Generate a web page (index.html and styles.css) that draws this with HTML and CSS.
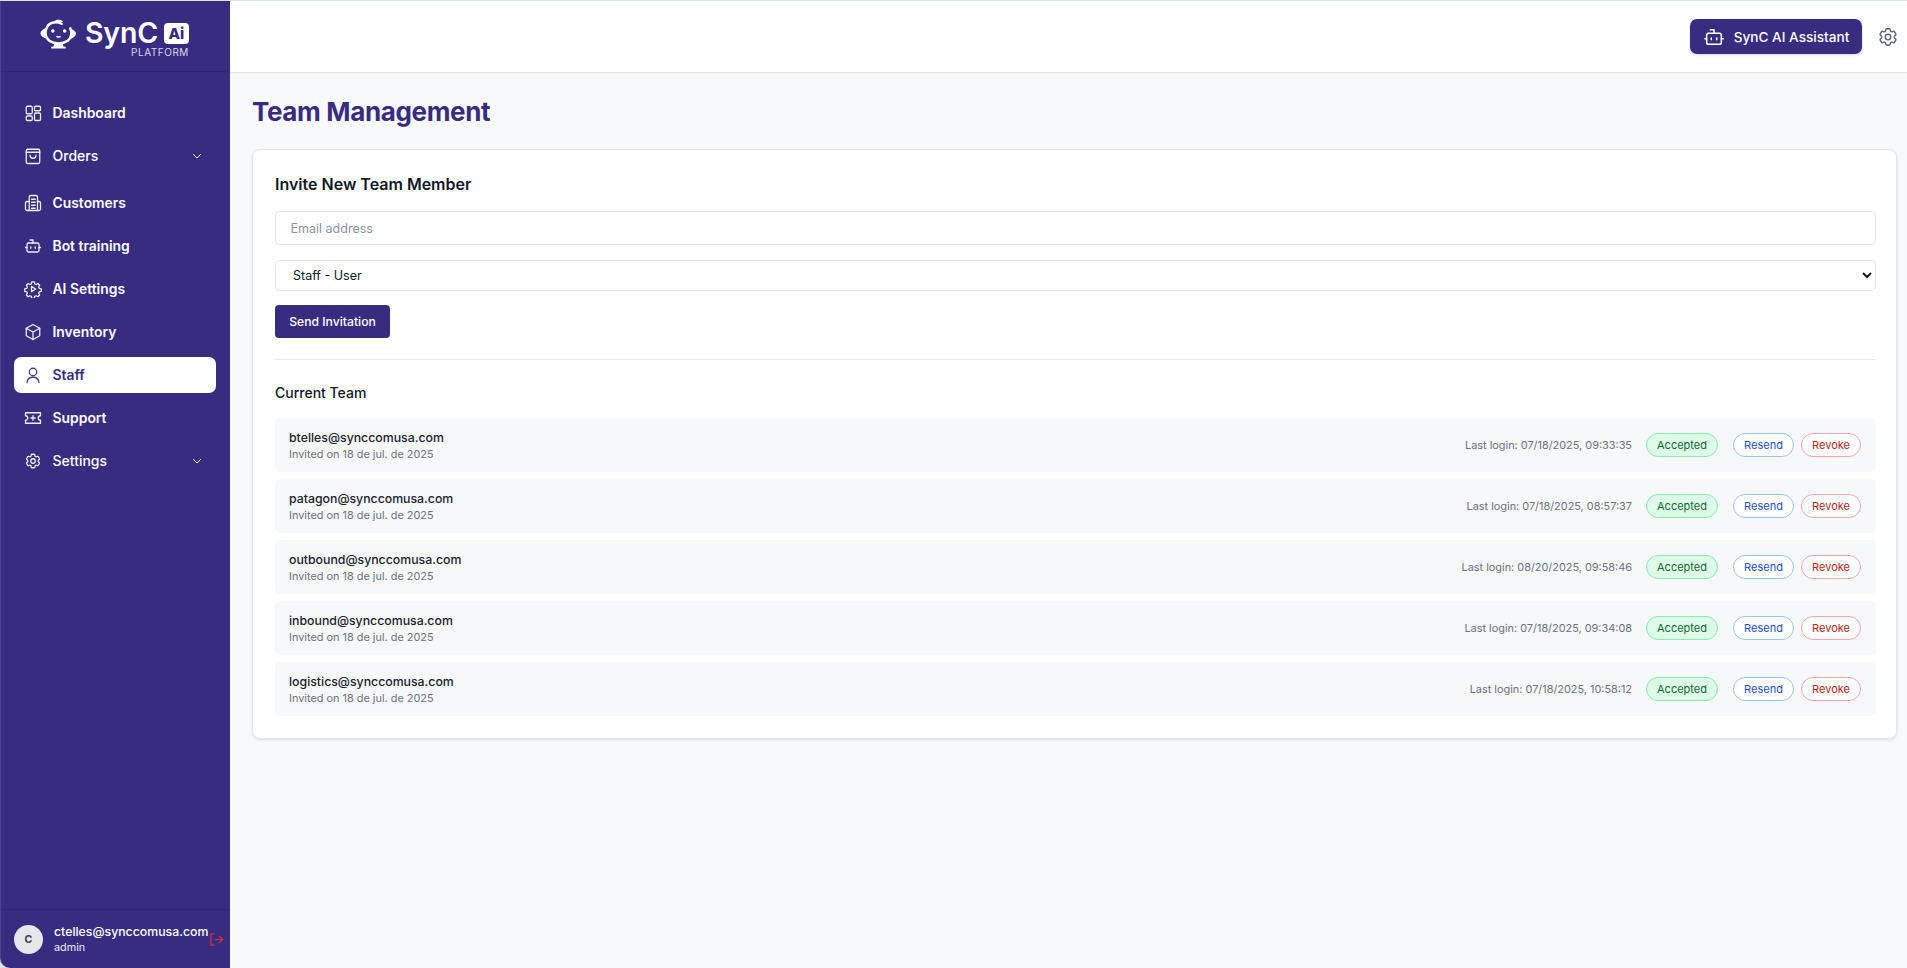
FILE: index.html
```html
<!DOCTYPE html>
<html lang="en">
<head>
<meta charset="utf-8">
<title>Team Management</title>
<link rel="stylesheet" href="styles.css">
</head>
<body>
<div class="app">
  <aside class="sidebar">
    <div class="brand">
      <svg class="brand-bot" viewBox="0 0 36 30" fill="none">
        <path d="M21 5.500C17 3 9 3.500 6.500 9.500 4.500 14 5.500 19 9 22 14 25.500 22 25.500 27 22 30.500 19 31.500 14 29.500 10" stroke="#fff" stroke-width="2.400" stroke-linecap="round"/>
        <path d="M6 9.500C2.500 11 .5 13 .5 15 .5 17 2.500 19 6.500 20Z" fill="#fff"/>
        <path d="M30 10.500C33 11.500 35 13 35 15 35 17 33 19 30 20Z" fill="#fff"/>
        <path d="M14 3.500C15 1 21 1 22.500 3.500 20 4 16 4 14 3.500Z" fill="#fff"/>
        <circle cx="12.500" cy="12.500" r="1.700" fill="#fff"/><circle cx="24" cy="12.500" r="1.700" fill="#fff"/>
        <path d="M16.500 18c1 .6 2.200.6 3 0" stroke="#fff" stroke-width="1.400" stroke-linecap="round"/>
        <path d="M14 25h8l1 3h2v1.500H11V28h2Z" fill="#fff"/>
      </svg>
      <div class="brand-text">
        <div class="brand-row"><span class="brand-name">SynC</span><span class="brand-badge">Ai</span></div>
        <div class="brand-sub">PLATFORM</div>
      </div>
    </div>
    <nav class="nav">
      <a class="nav-item"><svg class="ico" viewBox="0 0 24 24"><rect x="3" y="3" width="8" height="10" rx="1.500"/><rect x="14" y="3" width="8" height="6" rx="1.500"/><rect x="14" y="12" width="8" height="10" rx="1.500"/><rect x="3" y="16" width="8" height="6" rx="1.500"/></svg>Dashboard</a>
      <a class="nav-item nav-group"><svg class="ico" viewBox="0 0 24 24"><path d="M5 3h14a2 2 0 0 1 2 2v15a2 2 0 0 1-2 2H5a2 2 0 0 1-2-2V5a2 2 0 0 1 2-2Z"/><path d="M3 7h18"/><path d="M8 11a4 4 0 0 0 8 0"/></svg>Orders<svg class="chev" viewBox="0 0 24 24"><path d="m5 9 7 7 7-7"/></svg></a>
      <a class="nav-item nav-after-group"><svg class="ico" viewBox="0 0 24 24"><path d="M7 22V4a2 2 0 0 1 2-2h7a2 2 0 0 1 2 2v18"/><path d="M7 10H4a2 2 0 0 0-2 2v8a2 2 0 0 0 2 2h16a2 2 0 0 0 2-2v-8a2 2 0 0 0-2-2h-2"/><path d="M10 7h5M10 11h5M10 15h5M10 19h5"/></svg>Customers</a>
      <a class="nav-item"><svg class="ico" viewBox="0 0 24 24"><path d="M12 8V4H8"/><rect x="4" y="8" width="16" height="12" rx="2"/><path d="M2 14h2M20 14h2M15 13v2M9 13v2"/></svg>Bot training</a>
      <a class="nav-item"><svg class="ico" viewBox="0 0 24 24"><path d="M10.300 2.500h3.400l.5 2.600 2 .9 2.300-1.400 2.400 2.400-1.400 2.300.9 2 2.600.5v3.400l-2.600.5-.9 2 1.400 2.300-2.400 2.400-2.300-1.400-2 .9-.5 2.600h-3.400l-.5-2.600-2-.9-2.300 1.400-2.400-2.400 1.400-2.300-.9-2-2.600-.5v-3.400l2.600-.5.9-2-1.400-2.300 2.400-2.400 2.300 1.400 2-.9Z"/><path d="M10 8.500v7l5.500-3.500Z"/></svg>AI Settings</a>
      <a class="nav-item"><svg class="ico" viewBox="0 0 24 24"><path d="M12 2 21 7v10l-9 5-9-5V7Z"/><path d="m3 7 9 5 9-5M12 12v10"/></svg>Inventory</a>
      <a class="nav-item active"><svg class="ico" viewBox="0 0 24 24"><circle cx="12" cy="8" r="5"/><path d="M4 22c.5-5 3.500-7 8-7s7.500 2 8 7"/></svg>Staff</a>
      <a class="nav-item"><svg class="ico" viewBox="0 0 24 24"><path d="M2 5h20v4a3 3 0 0 0 0 6v4H2v-4a3 3 0 0 0 0-6Z"/><path d="M12 9v6M9 12h6"/></svg>Support</a>
      <a class="nav-item nav-group"><svg class="ico" viewBox="0 0 24 24"><path d="M9.594 3.940c.090-.542.560-.940 1.110-.940h2.593c.550 0 1.020.398 1.110.940l.213 1.281c.063.374.313.686.645.870.074.040.147.083.220.127.325.196.720.257 1.075.124l1.217-.456a1.125 1.125 0 0 1 1.370.490l1.296 2.247a1.125 1.125 0 0 1-.260 1.431l-1.003.827c-.293.241-.438.613-.430.992a7.723 7.723 0 0 1 0 .255c-.008.378.137.750.430.991l1.004.827c.424.350.534.955.260 1.430l-1.298 2.247a1.125 1.125 0 0 1-1.369.491l-1.217-.456c-.355-.133-.750-.072-1.076.124a6.470 6.470 0 0 1-.220.128c-.331.183-.581.495-.644.869l-.213 1.281c-.090.543-.560.940-1.110.940h-2.594c-.550 0-1.019-.398-1.110-.940l-.213-1.281c-.062-.374-.312-.686-.644-.870a6.520 6.520 0 0 1-.220-.127c-.325-.196-.720-.257-1.076-.124l-1.217.456a1.125 1.125 0 0 1-1.369-.490l-1.297-2.247a1.125 1.125 0 0 1 .260-1.431l1.004-.827c.292-.240.437-.613.430-.991a6.932 6.932 0 0 1 0-.255c.007-.380-.138-.751-.430-.992l-1.004-.827a1.125 1.125 0 0 1-.260-1.430l1.297-2.247a1.125 1.125 0 0 1 1.370-.491l1.216.456c.356.133.751.072 1.076-.124.072-.044.146-.086.220-.128.332-.183.582-.495.644-.869l.214-1.280Z"/><circle cx="12" cy="12" r="3"/></svg>Settings<svg class="chev" viewBox="0 0 24 24"><path d="m5 9 7 7 7-7"/></svg></a>
    </nav>
    <div class="user">
      <div class="avatar">C</div>
      <div class="user-text">
        <div class="user-mail">ctelles@synccomusa.com</div>
        <div class="user-role">admin</div>
      </div>
      <svg class="logout" viewBox="0 0 24 24"><path d="M8 3H3v18h5"/><path d="M10 12h12M17 7l5 5-5 5"/></svg>
    </div>
  </aside>
  <div class="content">
    <header class="topbar">
      <button class="assistant"><svg class="assistant-ico" viewBox="0 0 24 24"><path d="M12 8V4H8"/><rect x="4" y="8" width="16" height="12" rx="2"/><path d="M2 14h2M20 14h2M15 13v2M9 13v2"/></svg>SynC AI Assistant</button>
      <svg class="gear" viewBox="0 0 24 24"><path d="M9.594 3.940c.090-.542.560-.940 1.110-.940h2.593c.550 0 1.020.398 1.110.940l.213 1.281c.063.374.313.686.645.870.074.040.147.083.220.127.325.196.720.257 1.075.124l1.217-.456a1.125 1.125 0 0 1 1.370.490l1.296 2.247a1.125 1.125 0 0 1-.260 1.431l-1.003.827c-.293.241-.438.613-.430.992a7.723 7.723 0 0 1 0 .255c-.008.378.137.750.430.991l1.004.827c.424.350.534.955.260 1.430l-1.298 2.247a1.125 1.125 0 0 1-1.369.491l-1.217-.456c-.355-.133-.750-.072-1.076.124a6.470 6.470 0 0 1-.220.128c-.331.183-.581.495-.644.869l-.213 1.281c-.090.543-.560.940-1.110.940h-2.594c-.550 0-1.019-.398-1.110-.940l-.213-1.281c-.062-.374-.312-.686-.644-.870a6.520 6.520 0 0 1-.220-.127c-.325-.196-.720-.257-1.076-.124l-1.217.456a1.125 1.125 0 0 1-1.369-.490l-1.297-2.247a1.125 1.125 0 0 1 .260-1.431l1.004-.827c.292-.240.437-.613.430-.991a6.932 6.932 0 0 1 0-.255c.007-.380-.138-.751-.430-.992l-1.004-.827a1.125 1.125 0 0 1-.260-1.430l1.297-2.247a1.125 1.125 0 0 1 1.370-.491l1.216.456c.356.133.751.072 1.076-.124.072-.044.146-.086.220-.128.332-.183.582-.495.644-.869l.214-1.280Z"/><circle cx="12" cy="12" r="3"/></svg>
    </header>
    <main class="main">
      <h1 class="title">Team Management</h1>
      <section class="card">
        <h2 class="card-title">Invite New Team Member</h2>
        <input class="field" type="text" placeholder="Email address">
        <select class="select"><option>Staff - User</option></select>
        <button class="send">Send Invitation</button>
        <hr class="divider">
        <h3 class="team-title">Current Team</h3>
        <div class="team">
          <div class="row"><div class="who"><div class="mail">btelles@synccomusa.com</div><div class="invited">Invited on 18 de jul. de 2025</div></div><div class="login">Last login: 07/18/2025, 09:33:35</div><span class="status">Accepted</span><button class="act resend">Resend</button><button class="act revoke">Revoke</button></div>
          <div class="row"><div class="who"><div class="mail">patagon@synccomusa.com</div><div class="invited">Invited on 18 de jul. de 2025</div></div><div class="login">Last login: 07/18/2025, 08:57:37</div><span class="status">Accepted</span><button class="act resend">Resend</button><button class="act revoke">Revoke</button></div>
          <div class="row"><div class="who"><div class="mail">outbound@synccomusa.com</div><div class="invited">Invited on 18 de jul. de 2025</div></div><div class="login">Last login: 08/20/2025, 09:58:46</div><span class="status">Accepted</span><button class="act resend">Resend</button><button class="act revoke">Revoke</button></div>
          <div class="row"><div class="who"><div class="mail">inbound@synccomusa.com</div><div class="invited">Invited on 18 de jul. de 2025</div></div><div class="login">Last login: 07/18/2025, 09:34:08</div><span class="status">Accepted</span><button class="act resend">Resend</button><button class="act revoke">Revoke</button></div>
          <div class="row"><div class="who"><div class="mail">logistics@synccomusa.com</div><div class="invited">Invited on 18 de jul. de 2025</div></div><div class="login">Last login: 07/18/2025, 10:58:12</div><span class="status">Accepted</span><button class="act resend">Resend</button><button class="act revoke">Revoke</button></div>
        </div>
      </section>
    </main>
  </div>
</div>
</body>
</html>
```
FILE: styles.css
```css
* { box-sizing: border-box; }
html, body { margin: 0; height: 100%; background: #111; }
body { font-family: Inter, "Liberation Sans", sans-serif; color: #111827; overflow: hidden; }
.app { display: flex; height: 968px; padding-top: 1px; background: #d8e6e2; }
.sidebar { width: 230px; flex: none; background: #372c7f; color: #fff; display: flex; flex-direction: column; border-left: 1px solid #4a4190; border-bottom-left-radius: 10px; }
.brand { height: 71px; flex: none; display: flex; align-items: flex-start; gap: 8px; border-bottom: 1px solid #2f2570; padding: 17px 0 0 39px; }
.brand-bot { width: 37px; height: 31px; }
.brand-text { display: flex; flex-direction: column; align-items: flex-end; }
.brand-row { display: flex; align-items: center; gap: 6px; height: 26px; margin-top: 2px; }
.brand-name { font-size: 28.500px; font-weight: 600; line-height: 26px; letter-spacing: -.2px; }
.brand-badge { width: 25px; height: 21px; background: #fff; color: #372c7f; border-radius: 4px; font-size: 15px; line-height: 21px; font-weight: 800; text-align: center; }
.brand-sub { font-size: 10px; line-height: 11px; letter-spacing: .55px; color: #d9d6ee; margin-top: 1px; }
.nav { flex: 1; display: flex; flex-direction: column; padding: 23px 14px 0 13px; }
.nav-item { height: 36px; margin-bottom: 7px; display: flex; align-items: center; padding: 0 13px 0 10px; border-radius: 7px; font-size: 13.900px; font-weight: 600; line-height: 20px; color: #fff; }
.nav-group { font-weight: 500; font-size: 14px; }
.nav-after-group { margin-top: 4px; }
.nav-item.active { background: #fff; color: #372c7f; }
.ico { width: 18px; height: 18px; margin-right: 10.500px; flex: none; fill: none; stroke: currentColor; stroke-width: 1.700; stroke-linecap: round; stroke-linejoin: round; opacity: .92; }
.chev { width: 12px; height: 12px; margin-left: auto; fill: none; stroke: #fff; stroke-width: 2; stroke-linecap: round; stroke-linejoin: round; }
.user { height: 59px; flex: none; display: flex; align-items: center; padding: 0 0 0 13px; border-top: 1px solid #2f2570; }
.avatar { width: 29px; height: 29px; border-radius: 50%; background: #e5e7eb; color: #374151; font-size: 10.500px; font-weight: 700; display: flex; align-items: center; justify-content: center; flex: none; margin-right: 11px; }
.user-text { flex: none; width: 155px; white-space: nowrap; }
.user-mail { font-size: 12.300px; line-height: 16px; font-weight: 500; color: #fff; }
.user-role { font-size: 10.800px; line-height: 15px; color: #eceaf7; }
.logout { width: 15px; height: 15px; flex: none; fill: none; stroke: #d32f3f; stroke-width: 2; stroke-linecap: round; stroke-linejoin: round; }
.content { flex: 1; min-width: 0; display: flex; flex-direction: column; background: #f8f9fb; }
.topbar { height: 72px; flex: none; background: #fff; border-bottom: 1px solid #e3e5ea; display: flex; align-items: center; justify-content: flex-end; padding: 0 8px 0 0; box-shadow: 0 1px 2px rgba(0,0,0,.04); }
.assistant { height: 35px; width: 172px; margin-right: 15px; border: 0; border-radius: 7px; background: #372c7f; color: #fff; font-family: inherit; font-size: 13.600px; font-weight: 500; display: flex; align-items: center; justify-content: center; gap: 9px; box-shadow: 0 1px 3px rgba(0,0,0,.15); white-space: nowrap; }
.assistant-ico { width: 22px; height: 22px; fill: none; stroke: #fff; stroke-width: 1.600; stroke-linecap: round; stroke-linejoin: round; }
.gear { width: 22px; height: 22px; fill: none; stroke: #5b6472; stroke-width: 1.600; stroke-linecap: round; stroke-linejoin: round; }
.main { flex: 1; padding: 22px 10px 0 22px; }
.title { margin: 0 0 20px; font-size: 26px; line-height: 34px; font-weight: 700; color: #372c7f; letter-spacing: -.35px; }
.card { background: #fff; border: 1px solid #e5e7eb; border-radius: 8px; box-shadow: 0 1px 3px rgba(0,0,0,.12); padding: 22px 20px 22px 22px; display: flex; flex-direction: column; }
.card-title { margin: 0 0 15px; font-size: 16px; line-height: 24px; font-weight: 600; color: #111827; }
.field { height: 34px; width: 100%; border: 1px solid #e2e4e9; border-radius: 5px; padding: 0 14.500px; font-family: inherit; font-size: 12.500px; background: #fff; outline: 0; margin-bottom: 15px; }
.field::placeholder { color: #8b93a1; opacity: 1; }
.select { height: 31px; width: 100%; border: 1px solid #e2e4e9; border-radius: 5px; padding: 0 13px; font-family: inherit; font-size: 12.500px; color: #111827; background: #fff; margin-bottom: 14px; }
.send { width: 115px; height: 33px; border: 0; border-radius: 4px; background: #372c7f; color: #fff; font-family: inherit; font-size: 12.200px; font-weight: 500; padding: 0; }
.divider { width: 100%; margin: 21px 0 23px; border: 0; border-top: 1px solid #e5e7eb; }
.team-title { margin: 0 0 15px; font-size: 14px; line-height: 20px; font-weight: 500; color: #111827; }
.team { display: flex; flex-direction: column; gap: 7px; }
.row { height: 54px; background: #f7f8fa; border-radius: 5px; display: flex; align-items: center; padding: 0 15px 0 14px; }
.who { margin-right: auto; padding-top: 1px; }
.mail { font-size: 12.300px; line-height: 16px; font-weight: 500; color: #1b2230; }
.invited { font-size: 10.900px; line-height: 15px; color: #6b7280; margin-top: 1px; }
.login { font-size: 10.900px; color: #6b7280; margin-right: 14px; white-space: nowrap; }
.status { width: 72px; height: 24px; border: 1px solid #86efac; background: #dcfce7; color: #166534; border-radius: 12px; font-size: 11px; font-weight: 400; display: flex; align-items: center; justify-content: center; margin-right: 15px; }
.act { height: 24px; border-radius: 12px; background: #fff; font-family: inherit; font-size: 11px; font-weight: 400; padding: 0; }
.resend { width: 61px; border: 1px solid #93c5fd; color: #1d4ed8; margin-right: 7px; }
.revoke { width: 60px; border: 1px solid #fca5a5; color: #b91c1c; }
```
